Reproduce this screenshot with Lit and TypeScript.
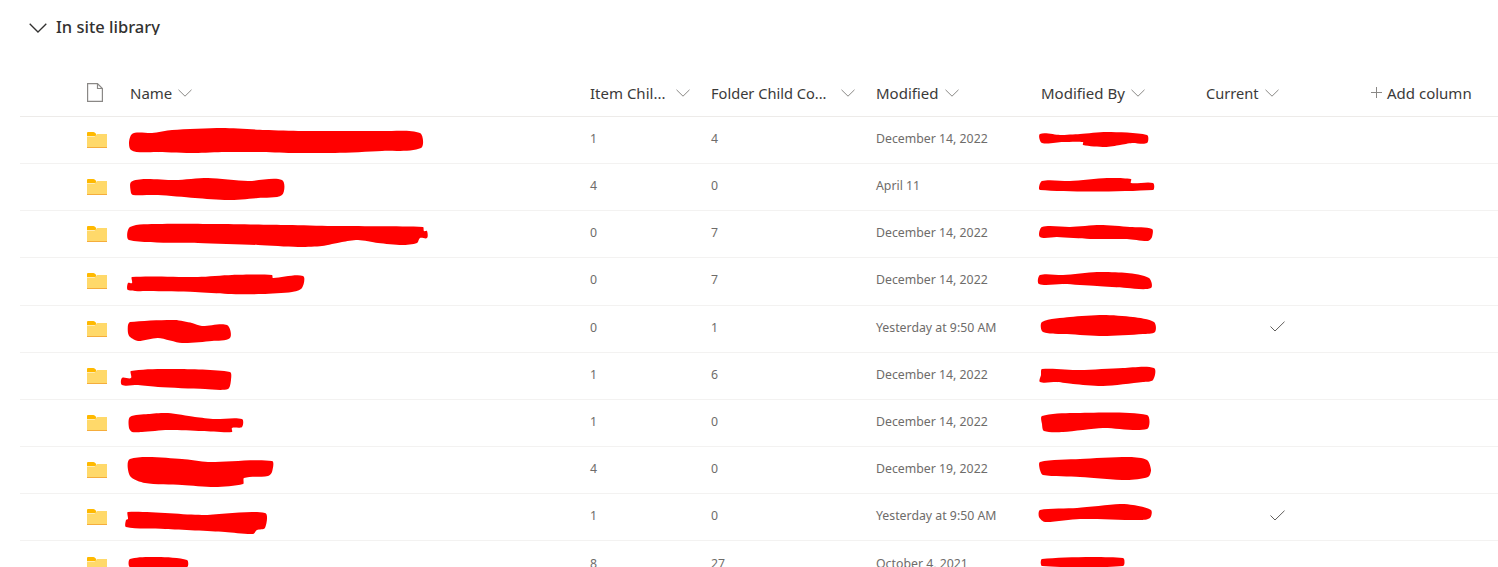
import { LitElement, html, css, svg } from "lit";
import { customElement } from "lit/decorators.js";

interface Row { item: string; folder: string; modified: string; current?: boolean }

const ROWS: Row[] = [
  { item: "1", folder: "4", modified: "December 14, 2022" },
  { item: "4", folder: "0", modified: "April 11" },
  { item: "0", folder: "7", modified: "December 14, 2022" },
  { item: "0", folder: "7", modified: "December 14, 2022" },
  { item: "0", folder: "1", modified: "Yesterday at 9:50 AM", current: true },
  { item: "1", folder: "6", modified: "December 14, 2022" },
  { item: "1", folder: "0", modified: "December 14, 2022" },
  { item: "4", folder: "0", modified: "December 19, 2022" },
  { item: "1", folder: "0", modified: "Yesterday at 9:50 AM", current: true },
  { item: "8", folder: "27", modified: "October 4, 2021" },
];

const COLUMNS: { label: string; cls: string }[] = [
  { label: "Name", cls: "c-name" },
  { label: "Item Chil...", cls: "c-item" },
  { label: "Folder Child Co...", cls: "c-folder" },
  { label: "Modified", cls: "c-mod" },
  { label: "Modified By", cls: "c-by" },
  { label: "Current", cls: "c-cur" },
];

/* Red redaction marks painted over the page, as outlines in page coordinates. */
const SCRIBBLES: number[][] = [
  [132,134,152,133,172,130,222,128,265,130,302,131,382,131,420,133,421,148,382,151,335,153,292,153,258,152,225,152,195,153,158,152,131,150],
  [131,182,145,179,175,180,208,178,248,181,282,180,282,195,258,198,228,200,195,198,158,195,133,195,131,193],
  [130,227,158,224,215,224,288,225,332,226,423,227,424,231,427,231,427,238,420,238,417,243,402,245,378,243,358,240,342,242,322,246,298,247,258,245,198,243,129,240],
  [132,277,198,277,232,275,272,275,273,278,303,276,302,288,292,292,262,294,228,294,195,292,148,291,128,290,128,283,132,283],
  [130,322,175,320,192,323,202,326,227,325,230,338,212,341,182,343,158,338,138,341,130,337,128,333,128,325],
  [131,371,175,369,230,372,231,380,228,389,205,389,158,387,138,385,122,385,122,378,131,378],
  [130,417,148,414,168,413,195,417,215,419,242,419,242,427,232,428,232,432,202,431,168,430,142,432,132,432,129,428],
  [130,459,182,459,208,462,272,461,272,472,268,476,244,478,243,484,215,487,182,485,145,483,130,476],
  [128,512,202,515,265,513,265,528,257,530,253,534,225,532,165,529,126,527,126,520,128,519],
  [130,559,158,557,187,560,187,567,130,567],
  [1040,134,1060,135,1080,134,1107,132,1147,135,1147,143,1132,143,1120,145,1105,147,1083,145,1083,142,1063,142,1042,143],
  [1042,181,1070,181,1107,178,1131,179,1131,183,1153,183,1153,190,1040,190],
  [1042,227,1070,227,1100,225,1130,227,1152,229,1152,237,1148,241,1127,239,1090,239,1057,237,1040,237],
  [1040,275,1063,275,1097,272,1127,273,1149,278,1151,288,1127,288,1097,286,1063,284,1039,284],
  [1042,322,1070,317,1103,315,1133,317,1154,322,1155,332,1143,334,1103,336,1067,334,1043,332],
  [1042,369,1080,370,1123,368,1154,368,1153,380,1143,382,1103,386,1073,384,1057,382,1040,382,1041,375],
  [1042,416,1073,413,1147,415,1147,429,1103,428,1063,432,1044,431,1042,424],
  [1040,462,1080,459,1130,457,1147,460,1151,470,1148,477,1127,480,1080,477,1043,475,1040,470],
  [1040,510,1077,508,1120,504,1133,505,1151,510,1150,518,1140,520,1080,519,1045,522,1039,517],
  [1042,559,1123,558,1123,566,1042,566],
];

function smooth(flat: number[]): string {
  const n = flat.length / 2;
  const p = (i: number) => {
    const k = ((i % n) + n) % n;
    return [flat[k * 2], flat[k * 2 + 1]];
  };
  const tangent = (a: number[], c: number[], len: number) => {
    const dx = c[0] - a[0];
    const dy = c[1] - a[1];
    const m = Math.hypot(dx, dy) || 1;
    return [(dx / m) * len * 0.25, (dy / m) * len * 0.25];
  };
  let d = `M${p(0)[0]} ${p(0)[1]}`;
  for (let i = 0; i < n; i++) {
    const a = p(i - 1);
    const b = p(i);
    const c = p(i + 1);
    const e = p(i + 2);
    const len = Math.hypot(c[0] - b[0], c[1] - b[1]);
    const t1 = tangent(a, c, len);
    const t2 = tangent(b, e, len);
    d += `C${(b[0] + t1[0]).toFixed(1)} ${(b[1] + t1[1]).toFixed(1)} ${(c[0] - t2[0]).toFixed(1)} ${(c[1] - t2[1]).toFixed(1)} ${c[0]} ${c[1]}`;
  }
  return d + "Z";
}

@customElement("folder-icon")
class FolderIcon extends LitElement {
  static styles = css`:host { display: block; width: 20px; height: 16px; } svg { display: block; }`;
  render() {
    return html`<svg width="20" height="16" viewBox="0 0 20 16">
      <path d="M0 1.2C0 .5.5 0 1.2 0h5c.8 0 1.4.4 2 1l1 1H9L9 4H0z" fill="#ffb900"/>
      <path d="M0 4.5h7.5L10 2h10V16H0z" fill="#ffd96a"/>
      <rect x="0" y="15" width="20" height="1" fill="#f5ad3c"/>
    </svg>`;
  }
}

@customElement("app-root")
export class AppRoot extends LitElement {
  static styles = css`
    :host {
      display: block;
      position: relative;
      height: 567px;
      overflow: hidden;
      background: #fff;
      font-family: "Noto Sans", "Open Sans", sans-serif;
      color: #323130;
    }
    .group {
      display: flex;
      align-items: flex-start;
      gap: 9px;
      height: 35px;
      padding: 17px 0 0 29px;
      box-sizing: border-box;
      overflow: hidden;
    }
    .group svg { flex: none; margin-top: 6px; }
    .group-title {
      font-size: 16.5px;
      line-height: 20px;
      font-weight: 500;
      color: #323130;
    }
    .list { margin: 35px 0 0 20px; }
    .row {
      display: grid;
      grid-template-columns: 110px 460px 121px 165px 165px 165px 164px 1fr;
      box-sizing: border-box;
      height: 47.2px;
      align-items: center;
      border-bottom: 1px solid #f3f2f1;
      font-size: 12.3px;
      color: #6e6c6a;
    }
    .head {
      height: 46.8px;
      border-bottom-color: #edebe9;
      font-size: 15px;
      color: #3b3a39;
    }
    .ico { padding-left: 67px; display: flex; }
    .cell { display: flex; align-items: center; white-space: nowrap; }
    .text { margin-bottom: 3px; }
    .hcell { gap: 6px; }
    .hcell svg { flex: none; }
    .c-item .lbl { width: 80px; }
    .c-folder .lbl { width: 124px; font-size: 14.6px; }
    .c-cur .lbl { font-size: 14.6px; }
    .check { padding-left: 64px; margin-bottom: 4px; }
    .add { gap: 5px; padding-left: 1px; }
    .overlay { position: absolute; left: 0; top: 0; pointer-events: none; }
  `;

  private chevron() {
    return html`<svg width="14" height="8" viewBox="0 0 14 8"><path d="M.5.8 7 7.2 13.5.8" fill="none" stroke="#8a8886" stroke-width="1"/></svg>`;
  }

  render() {
    return html`
      <div class="group">
        <svg width="18" height="10" viewBox="0 0 18 10"><path d="M.7.7 9 9 17.3.7" fill="none" stroke="#323130" stroke-width="1.3"/></svg>
        <span class="group-title">In site library</span>
      </div>
      <div class="list">
        <div class="row head">
          <div class="ico">
            <svg width="16" height="19" viewBox="0 0 16 19"><path d="M.6.6H10.5L15.4 5.5V18.4H.6Z M10.5.6V5.5H15.4" fill="#fff" stroke="#8a8886" stroke-width="1.2"/></svg>
          </div>
          ${COLUMNS.map(c => html`<div class="cell hcell ${c.cls}"><span class="lbl">${c.label}</span>${this.chevron()}</div>`)}
          <div class="cell add">
            <svg width="11" height="11" viewBox="0 0 11 11"><path d="M5.5 0V11M0 5.5H11" stroke="#8a8886" stroke-width="1"/></svg>
            <span>Add column</span>
          </div>
        </div>
        ${ROWS.map(r => html`
          <div class="row">
            <div class="ico"><folder-icon></folder-icon></div>
            <div class="cell"></div>
            <div class="cell text">${r.item}</div>
            <div class="cell text">${r.folder}</div>
            <div class="cell text">${r.modified}</div>
            <div class="cell"></div>
            <div class="cell check">${r.current
              ? html`<svg width="15" height="11" viewBox="0 0 15 11"><path d="M.5 5.5 5 10 14.5.7" fill="none" stroke="#605e5c" stroke-width="1"/></svg>`
              : ""}</div>
            <div class="cell"></div>
          </div>`)}
      </div>
      <svg class="overlay" width="1498" height="567" viewBox="0 0 1498 567">
        ${SCRIBBLES.map(s => svg`<path d=${smooth(s)} fill="#ff0000"/>`)}
      </svg>
    `;
  }
}
